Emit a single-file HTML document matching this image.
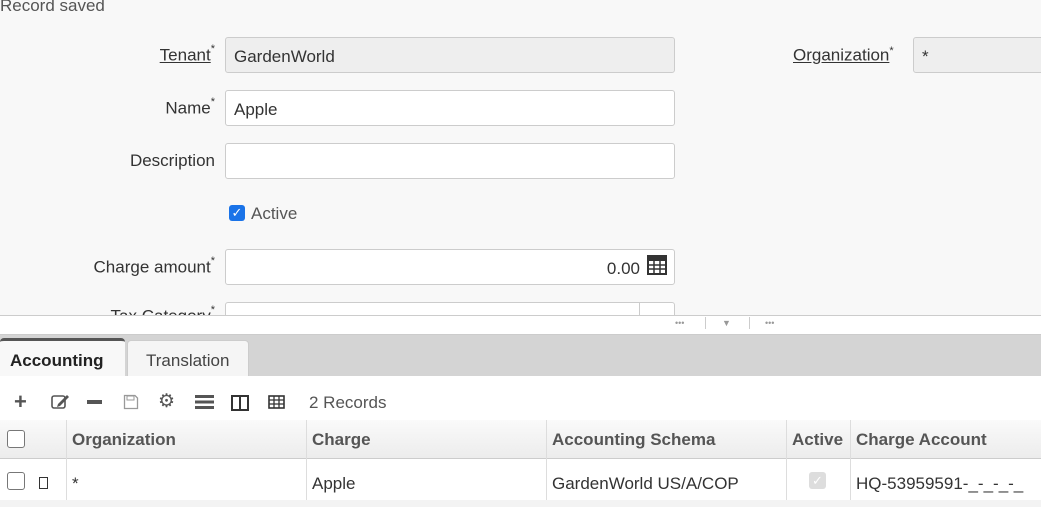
<!DOCTYPE html><html><head><style>
body{margin:0;width:1041px;height:507px;overflow:hidden;background:#f8f8f8;font-family:"Liberation Sans",sans-serif;color:#333;position:relative}
.a{position:absolute}
.lbl{position:absolute;right:826px;font-size:17px;color:#333;white-space:nowrap}
.lbl sup{font-size:11px;position:relative;top:-2px}
.inp{position:absolute;left:225px;border:1px solid #ccc;border-radius:3px;background:#fff;font-size:17px;line-height:38px;padding-left:8px;box-sizing:border-box;width:450px;height:36px;overflow:hidden}
.hd{position:absolute;top:420px;height:39px;line-height:40px;font-weight:bold;font-size:17px;color:#555;border-left:1px solid #ddd;padding-left:5px;box-sizing:border-box}
.cell{position:absolute;top:459px;height:41px;line-height:50px;font-size:17px;border-left:1px solid #ddd;padding-left:5px;box-sizing:border-box;white-space:nowrap;overflow:hidden}
.cb{position:absolute;width:16px;height:16px;border:1.5px solid #777;border-radius:3px;background:#fff}
.ic{position:absolute;top:394px;color:#555}
</style></head><body>
<div class="a" style="left:0;top:-4px;font-size:17px;color:#555">Record saved</div>
<div class="lbl" style="top:45px"><u>Tenant</u><sup>*</sup></div>
<div class="inp" style="top:37px;background:#eee">GardenWorld</div>
<div class="a" style="left:793px;top:45px;font-size:17px"><u>Organization</u><sup style="font-size:11px">*</sup></div>
<div class="a" style="left:913px;top:37px;width:140px;height:36px;border:1px solid #ccc;border-radius:3px;background:#eee;box-sizing:border-box;padding-left:8px;line-height:38px;font-size:17px">*</div>
<div class="lbl" style="top:98px">Name<sup>*</sup></div>
<div class="inp" style="top:90px">Apple</div>
<div class="lbl" style="top:151px">Description</div>
<div class="inp" style="top:143px"></div>
<div class="a" style="left:229px;top:205px;width:16px;height:16px;background:#1a73e8;border-radius:3px;color:#fff;font-size:13px;line-height:16px;text-align:center">✓</div>
<div class="a" style="left:251px;top:204px;font-size:17px;color:#555">Active</div>
<div class="lbl" style="top:257px">Charge amount<sup>*</sup></div>
<div class="inp" style="top:249px;text-align:right;padding-right:34px">0.00</div>
<svg class="a" style="left:647px;top:255px" width="20" height="20" viewBox="0 0 20 20"><rect x="1" y="1" width="18" height="18" fill="none" stroke="#333" stroke-width="2"/><rect x="1" y="1" width="18" height="5" fill="#333"/><path d="M1 10H19M1 14H19M7 6V19M13 6V19" stroke="#333" stroke-width="1.5"/></svg>
<div class="lbl" style="top:306px">Tax Category<sup>*</sup></div>
<div class="inp" style="top:302px">Standard</div>
<div class="a" style="left:639px;top:303px;width:1px;height:12px;background:#ccc"></div>
<div class="a" style="left:0;top:315px;width:1041px;height:20px;background:#fff;border-top:1px solid #ccc;border-bottom:1px solid #ccc;box-sizing:border-box"></div>
<div class="a" style="left:675px;top:318px;font-size:9px;color:#999">•••</div>
<div class="a" style="left:705px;top:317px;width:1px;height:12px;background:#ccc"></div>
<div class="a" style="left:722px;top:318px;font-size:9px;color:#999">▼</div>
<div class="a" style="left:749px;top:317px;width:1px;height:12px;background:#ccc"></div>
<div class="a" style="left:765px;top:318px;font-size:9px;color:#999">•••</div>
<div class="a" style="left:0;top:335px;width:1041px;height:41px;background:#d4d4d4"></div>
<div class="a" style="left:0;top:338px;width:125px;height:38px;background:#f8f8f8;border-top:3px solid #555;border-radius:4px 4px 0 0;box-sizing:border-box;font-weight:bold;font-size:17px;line-height:40px;padding-left:10px;color:#222">Accounting</div>
<div class="a" style="left:127px;top:340px;width:122px;height:36px;background:#f5f5f5;border:1px solid #ccc;border-bottom:none;border-radius:4px 4px 0 0;box-sizing:border-box;font-size:17px;line-height:40px;padding-left:18px;color:#444">Translation</div>
<div class="a" style="left:0;top:376px;width:1041px;height:44px;background:#fff"></div>
<div class="ic" style="left:14px;font-size:22px;top:389px;font-weight:bold">+</div>
<svg class="a" style="left:51px;top:393px" width="19" height="17"><rect x="1" y="3" width="13" height="12" rx="2" fill="none" stroke="#555" stroke-width="1.6"/><path d="M7 11L16 2L18 4L9 13L6 14Z" fill="#555"/></svg>
<div class="a" style="left:87px;top:400px;width:15px;height:4px;background:#555"></div>
<svg class="a" style="left:123px;top:394px" width="16" height="16"><path d="M1.5 1.5H12L14.5 4V14.5H1.5Z" fill="none" stroke="#999" stroke-width="1.3"/><rect x="4" y="2" width="7" height="4" fill="none" stroke="#999"/></svg>
<div class="ic" style="left:158px;top:390px;font-size:19px">⚙</div>
<svg class="a" style="left:195px;top:395px" width="19" height="14"><rect width="19" height="3" fill="#555"/><rect y="5.5" width="19" height="3" fill="#555"/><rect y="11" width="19" height="3" fill="#555"/></svg>
<svg class="a" style="left:231px;top:395px" width="18" height="16"><rect x="1" y="1" width="16" height="14" fill="none" stroke="#333" stroke-width="2"/><path d="M9 1V15" stroke="#333" stroke-width="2"/></svg>
<svg class="a" style="left:268px;top:395px" width="17" height="14"><rect x="1" y="1" width="15" height="12" fill="none" stroke="#333" stroke-width="1.6"/><path d="M1 5H16M1 9H16M6 1V13M11 1V13" stroke="#333" stroke-width="1.3"/></svg>
<div class="a" style="left:309px;top:393px;font-size:17px;color:#555">2 Records</div>
<div class="a" style="left:0;top:420px;width:1041px;height:39px;background:linear-gradient(#fafafa,#ececec);border-bottom:1px solid #ccc;box-sizing:border-box"></div>
<div class="cb" style="left:7px;top:430px"></div>
<div class="hd" style="left:66px;width:240px">Organization</div>
<div class="hd" style="left:306px;width:240px">Charge</div>
<div class="hd" style="left:546px;width:240px">Accounting Schema</div>
<div class="hd" style="left:786px;width:64px">Active</div>
<div class="hd" style="left:850px;width:191px">Charge Account</div>
<div class="a" style="left:0;top:459px;width:1041px;height:41px;background:#fff"></div>
<div class="a" style="left:0;top:500px;width:1041px;height:7px;background:#f3f3f3"></div>
<div class="cb" style="left:7px;top:472px"></div>
<div class="a" style="left:39px;top:477px;width:7px;height:10px;border:1px solid #333"></div>
<div class="cell" style="left:66px;width:240px">*</div>
<div class="cell" style="left:306px;width:240px">Apple</div>
<div class="cell" style="left:546px;width:240px">GardenWorld US/A/COP</div>
<div class="cell" style="left:786px;width:64px"></div>
<div class="a" style="left:809px;top:472px;width:17px;height:17px;background:#ddd;border-radius:3px;color:#fff;font-size:13px;text-align:center;line-height:17px">✓</div>
<div class="cell" style="left:850px;width:191px">HQ-53959591-_-_-_-_</div>
</body></html>
